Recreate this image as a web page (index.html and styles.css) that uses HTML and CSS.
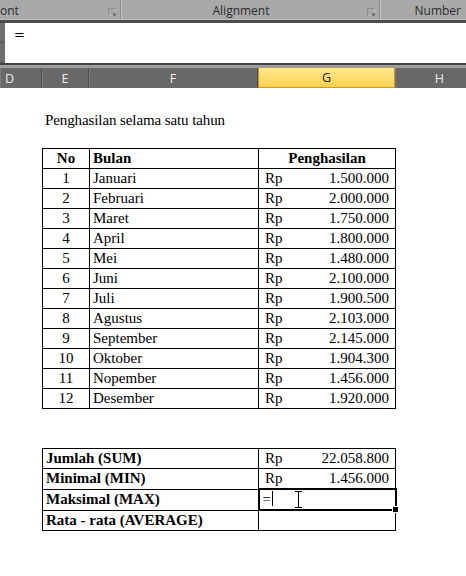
FILE: index.html
```html
<!DOCTYPE html>
<html>
<head>
<meta charset="utf-8">
<link rel="stylesheet" href="styles.css">
</head>
<body>
<div class="ribbon">
  <div class="grp grp-font"><span class="glabel">ont</span><span class="launcher"></span></div>
  <div class="grp grp-align"><span class="glabel">Alignment</span><span class="launcher"></span></div>
  <div class="grp grp-num"><span class="glabel">Number</span></div>
</div>
<div class="fbar">
  <div class="fbar-left"><div></div><div></div></div>
  <div class="fbar-input">=</div>
</div>
<div class="fbar-gap"></div>
<div class="colheads">
  <div class="ch c-d">D</div>
  <div class="ch c-e">E</div>
  <div class="ch c-f">F</div>
  <div class="ch c-g active">G</div>
  <div class="ch c-h">H</div>
</div>
<div class="sheet">
  <p class="title">Penghasilan selama satu tahun</p>
  <table class="data">
    <colgroup><col class="w-e"><col class="w-f"><col class="w-g"></colgroup>
    <tr class="head"><th class="no">No</th><th class="bulan">Bulan</th><th class="peng">Penghasilan</th></tr>
    <tr><td class="no">1</td><td>Januari</td><td><span class="rp">Rp</span><span class="amt">1.500.000</span></td></tr>
    <tr><td class="no">2</td><td>Februari</td><td><span class="rp">Rp</span><span class="amt">2.000.000</span></td></tr>
    <tr><td class="no">3</td><td>Maret</td><td><span class="rp">Rp</span><span class="amt">1.750.000</span></td></tr>
    <tr><td class="no">4</td><td>April</td><td><span class="rp">Rp</span><span class="amt">1.800.000</span></td></tr>
    <tr><td class="no">5</td><td>Mei</td><td><span class="rp">Rp</span><span class="amt">1.480.000</span></td></tr>
    <tr><td class="no">6</td><td>Juni</td><td><span class="rp">Rp</span><span class="amt">2.100.000</span></td></tr>
    <tr><td class="no">7</td><td>Juli</td><td><span class="rp">Rp</span><span class="amt">1.900.500</span></td></tr>
    <tr><td class="no">8</td><td>Agustus</td><td><span class="rp">Rp</span><span class="amt">2.103.000</span></td></tr>
    <tr><td class="no">9</td><td>September</td><td><span class="rp">Rp</span><span class="amt">2.145.000</span></td></tr>
    <tr><td class="no">10</td><td>Oktober</td><td><span class="rp">Rp</span><span class="amt">1.904.300</span></td></tr>
    <tr><td class="no">11</td><td>Nopember</td><td><span class="rp">Rp</span><span class="amt">1.456.000</span></td></tr>
    <tr><td class="no">12</td><td>Desember</td><td><span class="rp">Rp</span><span class="amt">1.920.000</span></td></tr>
  </table>
  <table class="data summary">
    <colgroup><col class="w-ef"><col class="w-g"></colgroup>
    <tr><th>Jumlah (SUM)</th><td><span class="rp">Rp</span><span class="amt">22.058.800</span></td></tr>
    <tr><th>Minimal (MIN)</th><td><span class="rp">Rp</span><span class="amt">1.456.000</span></td></tr>
    <tr><th>Maksimal (MAX)</th><td class="editing"><span class="eq">=</span><span class="caret"></span><span class="ibeam"><svg width="9" height="17" viewBox="0 0 9 17"><path d="M1 0.5h7M4.5 0.5v16M1 16.5h7" stroke="#000" stroke-width="1" fill="none"/></svg></span><span class="handle"></span></td></tr>
    <tr><th>Rata - rata (AVERAGE)</th><td></td></tr>
  </table>
</div>
</body>
</html>
```
FILE: styles.css
```css
html, body { margin: 0; padding: 0; }
body { width: 466px; height: 576px; overflow: hidden; background: #fff; font-family: "Liberation Serif", "Times New Roman", serif; }

.ribbon { display: flex; height: 20px; background: #a9a9a9; border-bottom: 1px solid #bdbdbd; box-sizing: border-box; font-family: "Open Sans", "DejaVu Sans", sans-serif; font-size: 12px; color: #2b2b2b; }
.grp { position: relative; display: flex; align-items: center; box-sizing: border-box; height: 100%; padding-top: 2px; }
.grp-font { width: 121px; border-right: 1px solid #8a8a8a; box-shadow: 1px 0 0 #c4c4c4; }
.grp-align { width: 259px; justify-content: center; padding-right: 18px; border-right: 1px solid #8a8a8a; box-shadow: 1px 0 0 #c4c4c4; }
.grp-num { flex: 1; justify-content: flex-end; padding-right: 5px; }
.glabel { line-height: 17px; }
.launcher { position: absolute; right: 4px; top: 8px; width: 6px; height: 6px; border: 1px solid #8f8f8f; border-right-color: #b9b9b9; border-bottom-color: #b9b9b9; }
.launcher::after { content: ""; position: absolute; right: -1px; bottom: -1px; width: 3px; height: 3px; background: #777; }

.fbar { display: flex; height: 40px; background: #555; border-top: 3px solid #4d4d4d; }
.fbar-left { width: 5px; display: flex; flex-direction: column; background: #6d6d6d; }
.fbar-left div { flex: 1; border-bottom: 1px solid #555; }
.fbar-input { flex: 1; background: #fff; font-family: "DejaVu Sans", sans-serif; font-size: 13px; padding: 4px 0 0 9px; box-sizing: border-box; color: #000; }
.fbar-gap { height: 2px; background: #444; border-bottom: 3px solid #9e9e9e; }

.colheads { display: flex; height: 20px; background: #686868; font-family: "Open Sans", "DejaVu Sans", sans-serif; font-size: 12.5px; color: #ececec; }
.ch { box-sizing: border-box; display: flex; align-items: center; justify-content: center; border-right: 1px solid #4e4e4e; box-shadow: inset 1px 0 0 #7a7a7a; }
.c-d { width: 42px; justify-content: flex-start; padding-left: 5px; }
.c-e { width: 47px; }
.c-f { width: 169px; }
.c-g { width: 137px; }
.c-h { flex: 1; border-right: 0; justify-content: flex-end; padding-right: 22px; }
.ch.active { background: linear-gradient(#ffe78f, #f9d24f); color: #222; border-left: 1px solid #c8902a; border-right: 1px solid #c8902a; border-bottom: 1px solid #d09a2a; box-shadow: none; }

.sheet { padding-left: 42px; font-size: 15px; color: #000; }
.title { margin: 0; padding: 24px 0 0 3px; height: 36px; line-height: 17px; letter-spacing: -0.1px; }
.data { border-collapse: collapse; table-layout: fixed; width: 354px; }
.w-e { width: 47px; }
.w-f { width: 169px; }
.w-g { width: 137px; }
.w-ef { width: 216px; }
.data td, .data th { border: 1.5px solid #000; height: 19px; padding: 0 3px; line-height: 17px; font-weight: normal; text-align: left; white-space: nowrap; }
.data tr.head th { font-weight: bold; }
.data .no { text-align: center; }
.data th.peng { text-align: center; }
.rp { display: inline-block; width: 50px; padding-left: 3px; }
.amt { display: inline-block; width: 74px; text-align: right; }
.summary { margin-top: 39px; }
.summary th { font-weight: bold; }
.editing { position: relative; border: 2px solid #000 !important; }
.caret { display: inline-block; width: 1px; height: 15px; background: #000; vertical-align: -2px; margin-left: 1px; }
.ibeam { position: absolute; left: 34px; top: 1px; line-height: 0; }
.handle { position: absolute; right: -4px; bottom: -4px; width: 5px; height: 5px; background: #000; border: 1px solid #fff; }
```
